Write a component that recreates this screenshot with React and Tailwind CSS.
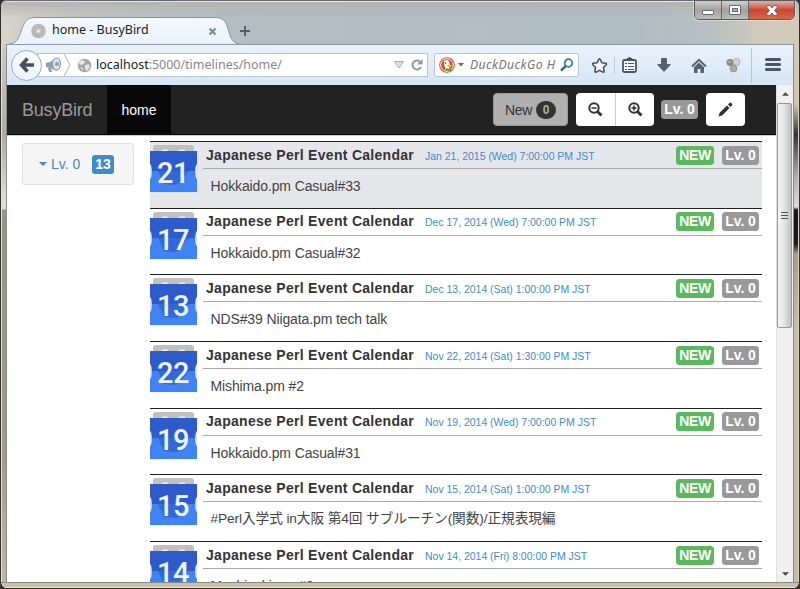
import { FaStar } from 'react-icons/fa';

const events = [
  { day: '21', date: 'Jan 21, 2015 (Wed) 7:00:00 PM JST', text: 'Hokkaido.pm Casual#33', selected: true },
  { day: '17', date: 'Dec 17, 2014 (Wed) 7:00:00 PM JST', text: 'Hokkaido.pm Casual#32' },
  { day: '13', date: 'Dec 13, 2014 (Sat) 1:00:00 PM JST', text: 'NDS#39 Niigata.pm tech talk' },
  { day: '22', date: 'Nov 22, 2014 (Sat) 1:30:00 PM JST', text: 'Mishima.pm #2' },
  { day: '19', date: 'Nov 19, 2014 (Wed) 7:00:00 PM JST', text: 'Hokkaido.pm Casual#31' },
  { day: '15', date: 'Nov 15, 2014 (Sat) 1:00:00 PM JST', text: '#Perl入学式 in大阪 第4回 サブルーチン(関数)/正規表現編', wide: true },
  { day: '14', date: 'Nov 14, 2014 (Fri) 8:00:00 PM JST', text: 'Mochizuki.pm #2' },
];

function CalendarIcon({ day }) {
  return (
    <svg width="47" height="47" viewBox="0 0 47 47" className="shrink-0">
      <path d="M3 7V2.500q0-2.500 3-2.500h35q3 0 3 2.500V7z" fill="#c0c0c0" />
      <path d="M12 4.500h6V6h-6zM29 4.500h6V6h-6z" fill="#e8edf8" />
      <path d="M0 6h47v41H0z" fill="#2d5bcc" />
      <path d="M0 26h47v21H0z" fill="#4083f2" />
      <path d="M8 26h31L27 40 14 39z" fill="#3269d8" />
      <path d="M0 19q1.800 1 1.800 7.500T0 34zM47 19q-1.800 1-1.800 7.500T47 34z" fill="#dfe8fc" />
      <text x="23" y="37.500" textAnchor="middle" fontFamily="Roboto" fontWeight="500" fontSize="29" letterSpacing="-.6" fill="#eef3ff">
        {day}
      </text>
    </svg>
  );
}

function Label({ green, children }) {
  return (
    <span className={`flex h-[19px] items-center justify-center rounded-[3.500px] text-[14px] font-bold whitespace-nowrap text-white ${green ? 'w-[38px] bg-[#5cb85c] tracking-[-0.4px]' : 'w-[37px] bg-[#999] tracking-[-0.1px]'}`}>
      {children}
    </span>
  );
}

function EventRow({ event }) {
  return (
    <li className={`flex h-[66.67px] gap-[6px] border-t border-[#222] pt-[3px] ${event.selected ? 'bg-[#e6e7eb]' : 'bg-white'}`}>
      <CalendarIcon day={event.day} />
      <div className="min-w-0 flex-1">
        <div className="flex h-[24px] items-start border-b border-[#aaa] pt-[0.800px]">
          <h2 className="ml-[3px] w-[219px] whitespace-nowrap text-[14px] leading-[19px] font-bold tracking-[0.29px] text-[#333]">
            Japanese Perl Event Calendar
          </h2>
          <a className="flex-1 whitespace-nowrap text-[10.500px] leading-[21px] tracking-[-0.02px] text-[#428bca]">{event.date}</a>
          <div className="mr-[3px] flex gap-[8px]">
            <Label green>NEW</Label>
            <Label>Lv. 0</Label>
          </div>
        </div>
        <p className={`ml-[7.500px] mt-[7px] whitespace-nowrap leading-[20px] text-[#444] ${event.wide ? 'text-[13.700px] tracking-[-0.100px]' : 'text-[14px] tracking-[-0.120px]'}`}>
          {event.text}
        </p>
      </div>
    </li>
  );
}

function WindowButtons() {
  return (
    <div className="absolute top-0 right-[4px] flex h-[20px] w-[101px] overflow-hidden rounded-b-[5px] border border-[#555b60] shadow-[0_0_0_1px_#ffffff60]">
      <div className="flex w-[27px] items-center justify-center border-r border-[#666] bg-linear-to-b from-[#d0d0ce] via-[#a3a19e] to-[#c0beb8]">
        <span className="mt-[5px] h-[5px] w-[12px] rounded-[1px] border border-[#666b78] bg-white" />
      </div>
      <div className="flex w-[27px] items-center justify-center border-r border-[#666] bg-linear-to-b from-[#d0d0ce] via-[#a3a19e] to-[#c0beb8]">
        <span className="h-[10px] w-[12px] rounded-[1px] border border-[#666b78] bg-white p-[2px]">
          <span className="block h-full border border-[#666b78] bg-[#aaa]" />
        </span>
      </div>
      <div className="flex flex-1 items-center justify-center bg-linear-to-b from-[#e3b0a4] via-[#c74631] via-50% to-[#d8694a]">
        <svg width="12" height="11" viewBox="0 0 12 11">
          <path d="M1 .5h3L6 3 8 .5h3v2L8.500 5.500 11 8.500v2H8L6 8l-2 2.500H1v-2l2.500-3L1 2.500z" fill="#fff" stroke="#5d5966" strokeWidth=".8" />
        </svg>
      </div>
    </div>
  );
}

function TitleBar() {
  return (
    <header className="relative h-[44px] bg-[linear-gradient(90deg,#d6d3c9_0,#c2c5c4_80px,#b3bdc2_220px,#b0bcc4_640px,#b7bfc1_710px,#d0cabb_760px,#d2ccb9_800px)]">
      <div className="absolute inset-x-0 top-0 h-[18px] border-t border-[#6a6770] bg-linear-to-b from-[#b5b4b3] to-transparent" />
      <div className="absolute inset-x-[5px] top-[1px] h-px bg-[#e6e4e0]" />
      <svg width="250" height="29" viewBox="0 0 250 29" className="absolute top-[16px] left-[-1px]">
        <defs>
          <linearGradient id="tab" x2="0" y2="1">
            <stop stopColor="#f5f8fc" />
            <stop offset="1" stopColor="#e9f2fb" />
          </linearGradient>
        </defs>
        <path d="M7 28.500C26 28 17 2 34 1.500H216C234 1.500 223 28 242 28.500V29H7z" fill="url(#tab)" />
        <path d="M7 28.500C26 28 17 2 34 1.500H216C234 1.500 223 28 242 28.500H250" fill="none" stroke="#89949b" />
      </svg>
      <div className="relative flex h-full w-[260px] items-start pt-[21px] pl-[30px] font-['Noto_Sans']">
        <svg width="16" height="16" viewBox="0 0 16 16" className="mt-[2px]">
          <circle cx="7.500" cy="8" r="7.300" fill="#b9b9b9" />
          <circle cx="7.500" cy="8" r="2.400" fill="#cecece" />
          <circle cx="7.500" cy="8" r="1" fill="#fff" />
        </svg>
        <span className="ml-[5px] w-[155px] text-[12.500px] leading-[18px] whitespace-nowrap text-[#222]">home - BusyBird</span>
        <svg width="10" height="20" viewBox="0 0 10 20">
          <path d="M2.500 7.500l6 6m0-6l-6 6" stroke="#7d858d" strokeWidth="2" />
        </svg>
        <svg width="12" height="20" viewBox="0 0 12 20" className="ml-[23px]">
          <path d="M5 5v10M0 10h10" stroke="#56606a" strokeWidth="2" />
        </svg>
      </div>
      <WindowButtons />
    </header>
  );
}

function Toolbar() {
  return (
    <div className="relative flex h-[41px] items-center border-t border-[#8e9aa4] bg-linear-to-b from-[#e9f2fb] to-[#d7e6f6]">
      <div className="z-10 ml-[4px] flex size-[31px] shrink-0 items-center justify-center rounded-full border border-[#9fabb8] bg-linear-to-b from-[#fafcff] to-[#edf4fc]">
        <svg width="16" height="16" viewBox="0 0 16 16">
          <path d="M8.500 1.500L2.500 8l6 6.500M3 8h12" fill="none" stroke="#44505c" strokeWidth="3.500" />
        </svg>
      </div>
      <div className="-ml-[5px] flex h-[24px] w-[391px] shrink-0 items-center border border-[#b7c5d3] bg-white pl-[7px] font-['Noto_Sans']">
        <svg width="17" height="16" viewBox="0 0 17 16" className="shrink-0">
          <path d="M1 6l4-1v6l-4-1zM5 5l7-4v13l-7-3zM3 11h3l1 4H4z" fill="#91a0b0" />
          <ellipse cx="11.500" cy="7" rx="4" ry="6" fill="#dce4ec" stroke="#91a0b0" strokeWidth="1.200" />
          <circle cx="12" cy="7" r="2" fill="#91a0b0" />
        </svg>
        <svg width="9" height="22" viewBox="0 0 9 22" className="ml-[1px] shrink-0">
          <path d="M1 0l6 11-6 11" fill="none" stroke="#c2c8ce" strokeWidth="1.300" />
        </svg>
        <svg width="15" height="15" viewBox="0 0 15 15" className="ml-[5px] shrink-0">
          <circle cx="7.500" cy="7.500" r="6.800" fill="#a5a5a5" />
          <path d="M2 4l3-2 3 1-1 3-3 1-2-1zM8 7l4-1 1 3-3 4-2-2zM3 9l3 1v3z" fill="#e5e5e5" />
        </svg>
        <span className="ml-[4px] w-[298px] text-[12.500px] tracking-[-0.02px] whitespace-nowrap text-[#888]">
          <span className="text-[#181818]">localhost</span>:5000/timelines/home/
        </span>
        <svg width="10" height="8" viewBox="0 0 10 8" className="shrink-0">
          <path d="M.5 .5h9L5 7z" fill="#dce2e8" stroke="#a0abb6" />
        </svg>
        <svg width="12" height="12" viewBox="0 0 12 12" className="ml-[7px] shrink-0">
          <path d="M9 2.600A4.500 4.500 0 1 0 10 8" fill="none" stroke="#8b98a5" strokeWidth="2" />
          <path d="M11.500 0v5.500H6z" fill="#8b98a5" />
        </svg>
      </div>
      <div className="ml-[6px] flex h-[24px] w-[145px] shrink-0 items-center rounded-[2px] border border-[#b7c5d3] bg-white pl-[4px] font-['Noto_Sans']">
        <svg width="16" height="16" viewBox="0 0 16 16" className="shrink-0">
          <circle cx="8" cy="8" r="7.800" fill="#d94b28" />
          <circle cx="8" cy="8" r="6.300" fill="none" stroke="#fff" strokeWidth="1" />
          <path d="M5 4q2-2 5 0l1 4-1 5-3 1-2-7z" fill="#fff" />
          <path d="M8 8h5l-1 2H9z" fill="#f9bd20" />
          <path d="M7 11l3 1 2-1v3H7z" fill="#52a447" />
          <circle cx="6.500" cy="6" r=".8" fill="#345" />
        </svg>
        <svg width="6" height="4" viewBox="0 0 6 4" className="ml-[3px] shrink-0">
          <path d="M0 0h6L3 3.500z" fill="#666" />
        </svg>
        <span className="ml-[6px] w-[88px] overflow-hidden text-[12.200px] tracking-[0.45px] whitespace-nowrap text-[#747474] italic">DuckDuckGo H</span>
        <svg width="14" height="14" viewBox="0 0 14 14" className="ml-[2px] shrink-0">
          <circle cx="8.500" cy="5" r="3.800" fill="none" stroke="#347bb8" strokeWidth="1.800" />
          <path d="M5.700 8L1 12.700" stroke="#296ba8" strokeWidth="2.500" />
        </svg>
      </div>
      <FaStar className="ml-[13px] size-[15px] shrink-0 overflow-visible fill-[#f5f9fd] stroke-[#46515d] stroke-[60]" />
      <span className="ml-[7px] h-[17px] w-px bg-[#bbc7d3]" />
      <svg width="15" height="16" viewBox="0 0 15 16" className="ml-[7px] shrink-0">
        <rect x="1" y="3" width="13" height="12" rx="1.500" fill="#eef4fa" stroke="#4b5764" strokeWidth="1.800" />
        <path d="M4 3.500l1.500-2h1L7.500 0l1 1.500h1l1.500 2zM3 6.500h2m1 0h6M3 9.500h2m1 0h6M3 12.500h2m1 0h6" fill="#4b5764" stroke="#4b5764" strokeWidth="1.200" />
      </svg>
      <svg width="14" height="14" viewBox="0 0 14 14" className="ml-[20px] shrink-0">
        <path d="M5 0h4q1 0 1 1v5h3.500v1L7 14 .5 7V6H4V1q0-1 1-1z" fill="#56616d" />
      </svg>
      <svg width="16" height="15" viewBox="0 0 16 15" className="ml-[20px] shrink-0">
        <path d="M1 8.500L8 1.800l7 6.700" fill="none" stroke="#56616d" strokeWidth="2" />
        <path d="M3 9.200l5-4.800 5 4.800V15H9.500v-4h-3v4H3z" fill="#56616d" />
      </svg>
      <svg width="15" height="15" viewBox="0 0 15 15" className="ml-[19px] shrink-0">
        <circle cx="4" cy="4.500" r="3.500" fill="#888" />
        <circle cx="10.500" cy="4" r="3.500" fill="#d2d2d2" stroke="#999" strokeWidth=".7" />
        <circle cx="7.500" cy="10.500" r="3.500" fill="#aaa" stroke="#888" strokeWidth=".7" />
        <circle cx="3.500" cy="4" r="1.200" fill="#bbb" />
      </svg>
      <span className="ml-[10px] h-[35px] w-px bg-[#bac6d2]" />
      <div className="ml-[13px] flex w-[16px] flex-col gap-[2px] pb-px">
        <span className="h-[3px] rounded-full bg-[#4b5662]" />
        <span className="h-[3px] rounded-full bg-[#4b5662]" />
        <span className="h-[3px] rounded-full bg-[#4b5662]" />
      </div>
    </div>
  );
}

function ZoomIcon({ plus }) {
  return (
    <svg width="15" height="15" viewBox="0 0 15 15">
      <circle cx="6" cy="6" r="4.700" fill="none" stroke="#333" strokeWidth="2" />
      <path d="M9.500 9.500l4 4" stroke="#333" strokeWidth="2.800" />
      <path d={plus ? 'M3.500 6h5M6 3.500v5' : 'M3.500 6h5'} stroke="#333" strokeWidth="1.600" />
    </svg>
  );
}

function Navbar() {
  return (
    <nav className="flex h-[50px] items-center border-b border-[#080808] bg-[#222]">
      <span className="w-[100px] pt-[2px] pl-[15px] text-[18px] tracking-[-0.2px] text-[#999]">BusyBird</span>
      <span className="flex h-[49px] w-[64px] items-center justify-center bg-[#080808] pt-px text-[14px] text-white">home</span>
      <button className="ml-auto flex h-[33px] w-[75px] items-center justify-center gap-[4px] rounded-[4px] border border-[#999] bg-[#b0b0b0] text-[14px] tracking-[-0.3px] text-[#333]">
        <span className="pt-px">New</span>
        <span className="flex h-[18px] w-[20px] items-center justify-center rounded-full bg-[#333] text-[12px] font-bold text-[#b0b0b0]">0</span>
      </button>
      <div className="ml-[8px] flex h-[33px] w-[78px] overflow-hidden rounded-[4px] bg-white">
        <button className="flex w-[40px] items-center justify-center border-r border-[#ccc]"><ZoomIcon /></button>
        <button className="flex flex-1 items-center justify-center"><ZoomIcon plus /></button>
      </div>
      <div className="ml-[7px]"><Label>Lv. 0</Label></div>
      <button className="mr-[31px] ml-[8px] flex h-[33px] w-[39px] items-center justify-center rounded-[4px] bg-white">
        <svg width="15" height="15" viewBox="0 0 15 15">
          <path d="M.5 14.500l1.300-4L9 3.500l2.500 2.500-7 7.200zM10 2.500l1.700-1.700q.8-.6 1.600.1l.8.8q.6.800 0 1.600L12.500 5z" fill="#333" />
        </svg>
      </button>
    </nav>
  );
}

function Scrollbar() {
  return (
    <div className="flex w-[17px] shrink-0 flex-col border-l border-[#e0e0e0] bg-[#f0f0f0]">
      <div className="flex h-[18px] items-center justify-center">
        <svg width="7" height="4" viewBox="0 0 8 4"><path d="M0 4l4-4 4 4z" fill="#444" /></svg>
      </div>
      <div className="flex h-[225px] w-[15px] flex-col items-center justify-center gap-[2px] rounded-[2px] border border-[#999] bg-linear-to-r from-[#f5f5f5] via-[#e3e3e5] to-[#bfc0c4]">
        <span className="h-px w-[7px] bg-[#555]" />
        <span className="h-px w-[7px] bg-[#555]" />
        <span className="h-px w-[7px] bg-[#555]" />
      </div>
      <div className="mt-auto flex h-[17px] items-center justify-center">
        <svg width="7" height="4" viewBox="0 0 8 4"><path d="M0 0h8L4 4z" fill="#444" /></svg>
      </div>
    </div>
  );
}

export default function App() {
  return (
    <div className="h-[589px] w-[800px] overflow-hidden bg-[#33343a] font-['Liberation_Sans','Noto_Sans_CJK_JP',sans-serif]">
      <div className="relative flex h-full flex-col overflow-hidden rounded-[7px] border-x border-b border-[#30302e] bg-[#cbc1a7]">
        <TitleBar />
        <div className="flex min-h-0 flex-1">
          <div className="w-[6px] shrink-0 border-r border-l border-r-[#858b8e] border-l-[#e8e5dd] bg-[linear-gradient(#d0cdc3_0,#b4aa98_90px,#e2dfd9_160px,#dedbd4_165px,#989381_166px,#a69b89_420px,#c3b99f_545px)]" />
          <div className="flex min-w-0 flex-1 flex-col">
            <Toolbar />
            <div className="flex min-h-0 flex-1">
              <div className="flex min-w-0 flex-1 flex-col bg-white">
                <Navbar />
                <div className="flex min-h-0 flex-1 border-t border-[#ccc]">
                  <aside className="mt-[7px] ml-[15px] flex h-[42px] w-[112px] shrink-0 items-center rounded-[3px] border border-[#e1e1e1] bg-[#f5f5f5] pl-[16px] text-[14px] text-[#428bca]">
                    <svg width="8" height="4" viewBox="0 0 8 4"><path d="M0 0h8L4 4z" fill="#428bca" /></svg>
                    <span className="ml-[4px] w-[41px]">Lv. 0</span>
                    <span className="flex h-[19px] w-[22px] items-center justify-center rounded-[3px] bg-[#428bca] text-[14px] font-bold text-white">13</span>
                  </aside>
                  <ul className="mt-[5px] ml-[16px] h-[441px] w-[612px] overflow-hidden">
                    {events.map((event) => <EventRow key={event.day} event={event} />)}
                  </ul>
                </div>
              </div>
              <Scrollbar />
            </div>
          </div>
          <div className="w-[6px] shrink-0 border-r border-l border-r-[#d8d4c9] border-l-[#858b8e] bg-[linear-gradient(#d3cab6_0,#d3c6a8_60px,#71746c_78px,#333_90px,#aaa_130px,#ddd_163px,#161616_166px,#1d1d1d_200px,#a99e86_210px,#c8bda2_280px,#c6baa0_545px)]" />
        </div>
        <div className="h-[6px] shrink-0 border-t border-b border-t-[#858b86] border-b-[#eee8da] bg-[#cbc1a7]" />
      </div>
    </div>
  );
}
